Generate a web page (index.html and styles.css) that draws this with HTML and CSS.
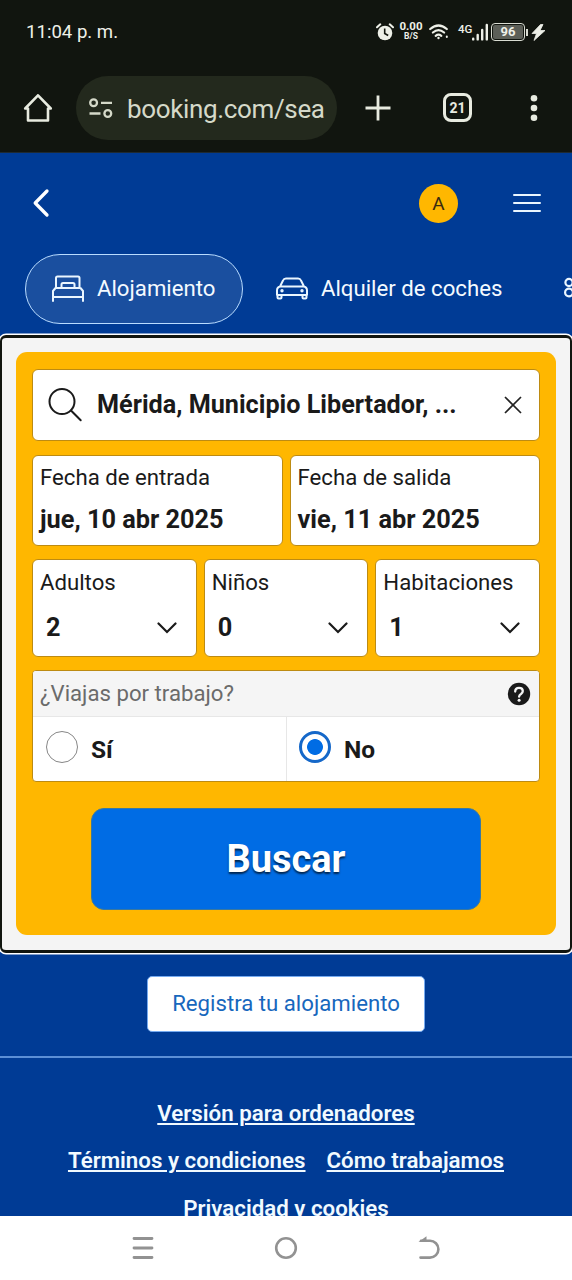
FILE: index.html
```html
<!DOCTYPE html>
<html lang="es">
<head>
<meta charset="utf-8">
<title>Booking.com</title>
<link rel="stylesheet" href="styles.css">
</head>
<body>
<div class="phone">
  <div class="status">
    <span class="clock">11:04 p. m.</span>
    <div class="status-icons">
      <svg class="alarm" width="18" height="18" viewBox="0 0 18 18"><circle cx="9" cy="10" r="7.3" fill="#eef0e8"/><path d="M1 4.3 4.3 1.3M17 4.3 13.700 1.3" stroke="#eef0e8" stroke-width="2" stroke-linecap="round"/><path d="M8.700 5.500v5l3.500 2" fill="none" stroke="#12160f" stroke-width="1.600"/></svg>
      <div class="speed"><span class="speed-value">0.00</span><span class="speed-unit">B/S</span></div>
      <svg class="wifi" width="20" height="16" viewBox="0 0 20 16" fill="none" stroke="#eef0e8" stroke-width="2.200" stroke-linecap="round"><path d="M1.200 5Q9.500-2 17.800 5M3.900 8.500q5.600-4.600 11.200 0M6.700 11.800q2.800-2.200 5.600 0"/><circle cx="9.500" cy="14" r="1.200" fill="#eef0e8" stroke="none"/><path d="M17.800 12.500v.5" stroke-width="2"/></svg>
      <span class="net">4G</span>
      <svg class="signal" width="18" height="18" viewBox="0 0 18 18" stroke="#eef0e8" stroke-width="2.400" stroke-linecap="round"><path d="M2.200 15.800v.6M6.700 12v4.400M11.200 7v9.400M15.800 2v14.400"/></svg>
      <div class="battery"><span class="battery-level">96</span></div>
      <span class="battery-tip"></span>
      <svg class="bolt" width="15" height="17" viewBox="0 0 15 17"><path d="M9.500.5 1 9.500h4.500L3 16.500 14 6.500H9L12 .5z" fill="#eef0e8" stroke="#eef0e8" stroke-width=".8"/></svg>
    </div>
  </div>

  <div class="browser">
    <svg class="home" width="30" height="30" viewBox="0 0 30 30" fill="none" stroke="#e8ebe0" stroke-width="2.600" stroke-linejoin="round" stroke-linecap="round"><path d="M2.200 15.500H5V27.500h20V15.500h2.800L15 2.300z"/></svg>
    <div class="url">
      <svg width="26" height="22" viewBox="0 0 26 22" fill="none" stroke="#d5d9c9" stroke-width="2.300"><circle cx="5.600" cy="5.800" r="3.400"/><path d="M13 5.800h11M1.500 16.500h11"/><circle cx="19.800" cy="16.500" r="3.400"/></svg>
      <span class="url-text">booking.com/sea</span>
    </div>
    <svg class="plus" width="26" height="26" viewBox="0 0 26 26" stroke="#e8ebe0" stroke-width="2.800"><path d="M13 .5v25M.5 13h25"/></svg>
    <div class="tabs-count">21</div>
    <svg class="dots" width="8" height="28" viewBox="0 0 8 28" fill="#e8ebe0"><circle cx="4" cy="4.300" r="3.300"/><circle cx="4" cy="14" r="3.300"/><circle cx="4" cy="23.700" r="3.300"/></svg>
  </div>

  <div class="page">
    <header class="header">
      <svg class="back" width="18" height="30" viewBox="0 0 18 30" fill="none" stroke="#fff" stroke-width="3.300" stroke-linecap="round" stroke-linejoin="round"><path d="M15 3 3.200 15 15 27"/></svg>
      <div class="avatar">A</div>
      <svg class="menu" width="28" height="20" viewBox="0 0 28 20" stroke="#eaf6ff" stroke-width="2" stroke-linecap="round"><path d="M1 2h26M1 10h26M1 18h26"/></svg>
    </header>

    <nav class="tabs">
      <div class="tab tab-active">
        <svg width="34" height="28" viewBox="0 0 34 28" fill="none" stroke="#eaf6ff" stroke-width="2" stroke-linejoin="round" stroke-linecap="round"><path d="M5 13V3Q5 1.500 6.500 1.500H27q1.500 0 1.500 1.500V13M2 26V16L4.500 13h25l2.500 3V26M2 22h30M10.500 13V9.500q0-1.500 1.500-1.500h10q1.500 0 1.500 1.500V13"/></svg>
        <span class="tab-text">Alojamiento</span>
      </div>
      <div class="tab">
        <svg width="34" height="28" viewBox="0 0 34 28" fill="none" stroke="#eaf6ff" stroke-width="2" stroke-linejoin="round" stroke-linecap="round"><path d="M5 11.500 8 5.500Q8.800 3.500 11 3.500h12q2.200 0 3 2l3 6M5.500 11.500h23q3.500.5 3.500 4V20H2v-4.500q0-3.500 3.500-4zM2.500 20v2.500q0 1 1 1h2q1 0 1-1V20M27.500 20v2.500q0 1 1 1h2q1 0 1-1V20"/><circle cx="7" cy="15.700" r=".7" fill="#eaf6ff"/><circle cx="27" cy="15.700" r=".7" fill="#eaf6ff"/></svg>
        <span class="tab-text">Alquiler de coches</span>
      </div>
      <div class="tab tab-cut">
        <svg width="30" height="28" viewBox="0 0 30 28" fill="none" stroke="#eaf6ff" stroke-width="2.200"><circle cx="6" cy="7.500" r="3.600"/><circle cx="6" cy="17.500" r="3.900"/><path d="M8.500 9.500 25 21M8.500 15.500 25 4"/></svg>
      </div>
    </nav>

    <main class="panel">
      <form class="search">
        <div class="box destination">
          <svg class="lens" width="36" height="36" viewBox="0 0 36 36" fill="none" stroke="#1a1a1a" stroke-width="2"><circle cx="14" cy="14.500" r="12.500"/><path d="m23 23.500 9.700 9.700" stroke-linecap="round"/></svg>
          <span class="strong place">Mérida, Municipio Libertador, ...</span>
          <svg class="clear" width="18" height="18" viewBox="0 0 18 18" stroke="#222" stroke-width="1.700"><path d="m1 1 16 16M17 1 1 17"/></svg>
        </div>
        <div class="row dates">
          <div class="box date"><span class="label">Fecha de entrada</span><span class="strong">jue, 10 abr 2025</span></div>
          <div class="box date"><span class="label">Fecha de salida</span><span class="strong">vie, 11 abr 2025</span></div>
        </div>
        <div class="row guests">
          <div class="box guest"><span class="label">Adultos</span><div class="pick"><span class="strong">2</span><svg width="20" height="12" viewBox="0 0 20 12"><path d="m1.500 1.500 8.500 8.500 8.500-8.500" /></svg></div></div>
          <div class="box guest"><span class="label">Niños</span><div class="pick"><span class="strong">0</span><svg width="20" height="12" viewBox="0 0 20 12"><path d="m1.500 1.500 8.500 8.500 8.500-8.500" /></svg></div></div>
          <div class="box guest"><span class="label">Habitaciones</span><div class="pick"><span class="strong">1</span><svg width="20" height="12" viewBox="0 0 20 12"><path d="m1.500 1.500 8.500 8.500 8.500-8.500" /></svg></div></div>
        </div>
        <div class="box work">
          <div class="work-head"><span class="label work-label">¿Viajas por trabajo?</span>
            <svg width="24" height="24" viewBox="0 0 24 24"><circle cx="12" cy="12" r="11.200" fill="#1a1a1a"/><path d="M8.200 9.500q0-3.700 3.800-3.700t3.800 3.300q0 1.700-1.800 2.900-1.900 1.200-1.900 2.700" fill="none" stroke="#f5f5f5" stroke-width="2.300" stroke-linecap="round"/><circle cx="12.100" cy="18.200" r="1.500" fill="#f5f5f5"/></svg>
          </div>
          <div class="options">
            <div class="option"><span class="radio"></span><span class="strong answer">Sí</span></div>
            <div class="option"><span class="radio radio-on"></span><span class="strong answer">No</span></div>
          </div>
        </div>
        <div class="submit">Buscar</div>
      </form>
    </main>

    <div class="register-wrap"><div class="register">Registra tu alojamiento</div></div>
    <footer class="footer">
      <div class="links"><a class="link">Versión para ordenadores</a></div>
      <div class="links"><a class="link">Términos y condiciones</a><a class="link">Cómo trabajamos</a></div>
      <div class="links"><a class="link">Privacidad y cookies</a></div>
    </footer>
  </div>

  <div class="navbar">
    <svg width="26" height="26" viewBox="0 0 26 26" fill="none" stroke="#929292" stroke-width="2.800" stroke-linecap="round"><path d="M4 3.500h18M4 13h18M4 22.500h18"/></svg>
    <svg width="26" height="26" viewBox="0 0 26 26" fill="none" stroke="#929292" stroke-width="2.600"><circle cx="13" cy="13" r="9.800"/></svg>
    <svg width="26" height="26" viewBox="0 0 26 26" fill="none" stroke="#929292" stroke-width="2.600" stroke-linecap="round"><path d="M4.500 22.600H14a8.400 8.400 0 0 0 0-16.800H5"/><path d="M2.500 7.100 10.500 1.200V7.100z" fill="#929292" stroke="none"/></svg>
  </div>
</div>
</body>
</html>
```
FILE: styles.css
```css
* { box-sizing: border-box; }
body { margin: 0; font-family: Roboto, "Noto Sans", sans-serif; color: #1a1a1a; }
svg { display: block; flex: none; }
span, a, .submit, .register { white-space: nowrap; }
.phone { width: 572px; height: 1280px; display: flex; flex-direction: column; overflow: hidden; background: #11150f; }

.status { height: 64px; flex: none; display: flex; justify-content: space-between; align-items: center; padding: 0 26px 0 26px; color: #eef0e8; }
.clock { font-size: 18.600px; }
.status-icons { display: flex; align-items: center; }
.speed { display: flex; flex-direction: column; align-items: center; width: 24px; margin: -3px 6px 0 5px; }
.speed-value { font-size: 11.500px; line-height: 11px; font-weight: 700; }
.speed-unit { font-size: 8.500px; line-height: 9px; font-weight: 700; }
.net { font-size: 11.500px; font-weight: 500; margin: -7px 0 0 9px; width: 13px; }
.battery { width: 34px; height: 18px; margin-left: 2px; border: 1.500px solid #d9dcd2; border-radius: 4px; padding: 1px; display: flex; }
.battery-level { flex: 1; background: #5c5f58; border-radius: 2px; font-size: 13px; line-height: 14px; font-weight: 700; text-align: center; }
.battery-tip { width: 2px; height: 7px; background: #d9dcd2; margin: 0 3px 0 1px; }

.browser { height: 89px; flex: none; display: flex; align-items: flex-start; padding: 12px 34px 0 23px; border-bottom: 1px solid #1e2a33; }
.home { margin-top: 17px; }
.url { width: 261px; height: 64px; margin-left: 23px; padding-left: 12px; border-radius: 32px; background: #23291d; display: flex; align-items: center; gap: 13px; }
.url-text { font-size: 26px; letter-spacing: -.35px; color: #d5d9c9; padding-top: 1px; }
.plus { margin: 19px 0 0 28px; }
.tabs-count { width: 29px; height: 29px; margin: 17px 0 0 52px; border: 3px solid #e8ebe0; border-radius: 8px; color: #e8ebe0; font-size: 14px; font-weight: 700; line-height: 25px; text-align: center; }
.dots { margin: 18px 0 0 58px; }

.page { height: 1063px; flex: none; background: #003b95; overflow: hidden; }
.header { height: 101px; display: flex; align-items: center; padding: 0 31px 1px 32px; }
.avatar { width: 39px; height: 39px; margin-left: auto; border-radius: 50%; background: #ffb700; color: #3a2a10; font-size: 19px; line-height: 39px; text-align: center; }
.menu { margin-left: 55px; }
.tabs { height: 80px; display: flex; align-items: flex-start; }
.tab { height: 70px; flex: none; display: flex; align-items: center; gap: 12px; color: #f4faff; }
.tab-active { width: 218px; margin-left: 25px; padding-left: 25px; border: 1.500px solid #b9dcff; border-radius: 35px; background: #1a4f9f; }
.tab-text { font-size: 22.200px; margin-top: -2px; }
.tab:nth-child(2) { width: 320px; padding-left: 32px; }

.panel { height: 618px; margin-top: 1px; padding: 14px 14px 0; border: solid #11150f; border-width: 3px 2px; border-radius: 6px; background: #f4f4f4; box-shadow: 0 0 0 1.500px #fff; }
.search { height: 583px; border-radius: 11px; background: #ffb700; padding: 17px 16px 0; }
.box { border: 1px solid #bd8b12; border-radius: 6px; background: #fff; }
.label { font-size: 22.200px; line-height: 26px; }
.strong { font-size: 25.300px; line-height: 28px; font-weight: 700; }
.destination { height: 72px; display: flex; align-items: center; padding: 0 17px 0 15px; }
.place { margin-left: 13px; font-size: 25.200px; }
.clear { margin-left: auto; }
.row { display: flex; gap: 7px; margin-top: 14px; }
.date { flex: 1; height: 91px; padding: 8px 7px; display: flex; flex-direction: column; gap: 16px; }
.guests { margin-top: 13px; }
.guest { flex: 1; height: 98px; padding: 9px 7px; }
.guest .label { display: block; }
.pick { display: flex; align-items: center; justify-content: space-between; margin: 19px 12px 0 6px; }
.pick path { fill: none; stroke: #1a1a1a; stroke-width: 2.200; stroke-linecap: round; }
.work { height: 112px; margin-top: 13px; overflow: hidden; border-radius: 4px; }
.work-head { height: 46px; padding: 0 8px 0 7px; background: #f5f5f5; border-bottom: 1px solid #e7e7e7; display: flex; align-items: center; justify-content: space-between; }
.work-label { color: #6b6b6b; margin-top: -2px; }
.options { display: flex; height: 64px; }
.option { flex: 1; display: flex; align-items: center; gap: 13px; padding: 0 0 5px 13px; }
.option .answer { padding-top: 6px; font-size: 24.500px; }
.option + .option { border-left: 1px solid #e7e7e7; padding-left: 12px; }
.radio { width: 32px; height: 32px; border: 1.500px solid #868686; border-radius: 50%; }
.radio-on { border: 3px solid #1568c9; background: radial-gradient(circle, #006ce4 0 7.500px, #fff 8.300px); }
.submit { width: 390px; height: 102px; margin: 26px auto 0; border: 1px solid #3978a0; border-radius: 13px; background: #006ce4; color: #fff; font-size: 38px; line-height: 101px; font-weight: 700; text-align: center; text-shadow: 0 2px 2px rgba(0,0,0,.65); }

.register-wrap { height: 105px; padding-top: 23px; border-bottom: 2px solid #5c8fd6; }
.register { width: 278px; height: 56px; margin: 0 auto; border: 1px solid #75aaf0; border-radius: 5px; background: #fff; color: #1767bd; font-size: 22.200px; line-height: 52px; text-align: center; }
.footer { padding-top: 31px; }
.links { height: 47.500px; display: flex; justify-content: center; align-items: center; gap: 21px; }
.link { color: #f1faff; font-size: 22.300px; font-weight: 600; text-decoration: underline; text-decoration-thickness: 2px; text-underline-offset: 2px; }
.navbar { height: 64px; flex: none; background: #fff; display: flex; justify-content: center; align-items: center; gap: 117px; }
```
